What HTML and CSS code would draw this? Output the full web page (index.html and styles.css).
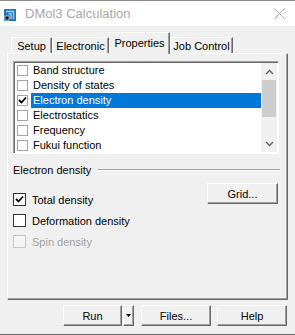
FILE: index.html
```html
<!DOCTYPE html>
<html lang="en">
<head>
    <meta charset="UTF-8">
    <title>DMol3 Calculation</title>
    <link rel="stylesheet" href="styles.css">
</head>
<body>
    <div class="window">
        <div class="titlebar">
            <svg class="app-icon" width="12" height="12" viewBox="0 0 12 12">
                <rect x="0" y="0" width="12" height="12" fill="#1f74bd"/>
                <path d="M2 2.5 H9.5 V10" fill="none" stroke="#9fd0f5" stroke-width="1.4"/>
                <path d="M4.5 5 H7 V10" fill="none" stroke="#9fd0f5" stroke-width="1.4"/>
                <rect x="1" y="7" width="4" height="4" fill="#111" stroke="#fff" stroke-width="0.6"/>
            </svg>
            <span class="title">DMol3 Calculation</span>
            <svg class="close" width="11" height="11" viewBox="0 0 11 11">
                <path d="M0.5 0.5 L10.5 10.5 M10.5 0.5 L0.5 10.5" stroke="#a8a8a8" stroke-width="0.9"/>
            </svg>
        </div>

        <div class="tabs">
            <div class="tab tab-setup">Setup</div>
            <div class="tab tab-electronic">Electronic</div>
            <div class="tab tab-properties active">Properties</div>
            <div class="tab tab-job">Job Control</div>
        </div>

        <div class="panel">
            <div class="listbox">
                <ul class="items">
                    <li><span class="check"></span><span class="label">Band structure</span></li>
                    <li><span class="check"></span><span class="label">Density of states</span></li>
                    <li class="selected">
                        <span class="check">
                            <svg width="9" height="9" viewBox="0 0 9 9"><path d="M1 4 L3.5 6.5 L8 1.5" fill="none" stroke="#000" stroke-width="1.8"/></svg>
                        </span>
                        <span class="label">Electron density</span>
                    </li>
                    <li><span class="check"></span><span class="label">Electrostatics</span></li>
                    <li><span class="check"></span><span class="label">Frequency</span></li>
                    <li><span class="check"></span><span class="label">Fukui function</span></li>
                </ul>
                <div class="scrollbar">
                    <div class="arrow">
                        <svg width="9" height="6" viewBox="0 0 9 6"><path d="M1 5 L4.5 1.5 L8 5" fill="none" stroke="#606060" stroke-width="1.4"/></svg>
                    </div>
                    <div class="thumb"></div>
                    <div class="track"></div>
                    <div class="arrow">
                        <svg width="9" height="6" viewBox="0 0 9 6"><path d="M1 1 L4.5 4.5 L8 1" fill="none" stroke="#606060" stroke-width="1.4"/></svg>
                    </div>
                </div>
            </div>

            <div class="group-title">
                <span>Electron density</span>
                <div class="rule"></div>
            </div>

            <div class="options">
                <div class="checks">
                    <div class="option">
                        <span class="box">
                            <svg width="9" height="9" viewBox="0 0 9 9"><path d="M1 4 L3.5 6.5 L8 1.5" fill="none" stroke="#000" stroke-width="1.8"/></svg>
                        </span>
                        Total density
                    </div>
                    <div class="option"><span class="box"></span>Deformation density</div>
                    <div class="option disabled"><span class="box"></span>Spin density</div>
                </div>
                <button class="btn grid-btn">Grid...</button>
            </div>
        </div>

        <div class="footer">
            <button class="btn run-btn">Run</button>
            <button class="btn drop-btn">
                <svg width="5" height="3" viewBox="0 0 5 3"><path d="M0 0 H5 L2.5 3 Z" fill="#000"/></svg>
            </button>
            <button class="btn files-btn">Files...</button>
            <button class="btn help-btn">Help</button>
        </div>
    </div>
</body>
</html>
```

FILE: styles.css
```css
body {
    margin: 0;
    font-family: "Liberation Sans", Arial, sans-serif;
    font-size: 11px;
    color: #000;
    background: #f0f0f0;
}

.window {
    width: 295px;
    height: 335px;
    box-sizing: border-box;
    border-top: 1px solid #8c8c8c;
    border-bottom: 1px solid #6a6a6a;
    background: #f0f0f0;
}

/* title bar */
.titlebar {
    height: 25px;
    background: #fff;
    display: flex;
    align-items: center;
    padding-left: 4px;
}

.app-icon {
    margin-top: 2px;
}

.title {
    margin-left: 9px;
    font-size: 13px;
    color: #a8a8a8;
}

.close {
    margin-left: auto;
    margin-right: 10px;
}

/* tabs */
.tabs {
    height: 27px;
    display: flex;
    align-items: flex-end;
    padding-left: 11px;
}

.tab {
    height: 16px;
    line-height: 16px;
    box-sizing: border-box;
    text-align: center;
    border-top: 1px solid #fff;
    border-left: 1px solid #fff;
    border-right: 1px solid #696969;
    box-shadow: inset -1px 0 #a0a0a0;
    background: #f0f0f0;
}

.tab-setup { width: 41px; }
.tab-electronic { width: 57px; }
.tab-properties { width: 61px; }
.tab-job { width: 63px; }

.tab.active {
    height: 22px;
    line-height: 20px;
    margin-bottom: -1px;
    position: relative;
    z-index: 1;
}

/* tab page */
.panel {
    margin: 0 7px;
    height: 247px;
    box-sizing: border-box;
    border-top: 1px solid #fff;
    border-left: 1px solid #fff;
    border-right: 1px solid #696969;
    border-bottom: 1px solid #696969;
    box-shadow: inset -1px -1px #a0a0a0;
    padding: 7px 0 0 5px;
}

.listbox {
    width: 266px;
    height: 93px;
    box-sizing: border-box;
    border: 1px solid;
    border-color: #a0a0a0 #fff #fff #a0a0a0;
    padding: 1px;
    box-shadow: inset 1px 1px #696969;
    background: #fff;
    display: flex;
    overflow: hidden;
}

.items {
    list-style: none;
    margin: 0;
    padding: 0;
    flex: 1;
    overflow: hidden;
}

.items li {
    height: 15px;
    display: flex;
    align-items: center;
    padding-left: 2px;
}

.check {
    width: 11px;
    height: 11px;
    box-sizing: border-box;
    border: 1px solid #a5a5a5;
    background: #fff;
    display: flex;
    align-items: center;
    justify-content: center;
}

.label {
    margin-left: 3px;
    padding-left: 2px;
    flex: 1;
    line-height: 15px;
    height: 15px;
}

.selected .label {
    background: #0078d7;
    color: #fff;
}

.scrollbar {
    width: 16px;
    display: flex;
    flex-direction: column;
    background: #f0f0f0;
}

.arrow {
    height: 17px;
    display: flex;
    align-items: center;
    justify-content: center;
}

.thumb {
    height: 37px;
    margin: 0 1px;
    background: #cdcdcd;
}

.track {
    flex: 1;
}

/* group */
.group-title {
    margin-top: 9px;
    width: 267px;
    height: 13px;
    display: flex;
    align-items: center;
}

.rule {
    flex: 1;
    margin-left: 7px;
    border-top: 1px solid #a0a0a0;
    border-bottom: 1px solid #fff;
}

.options {
    margin-top: 7px;
    width: 265px;
    display: flex;
    justify-content: space-between;
    align-items: flex-start;
}

.checks {
    padding-top: 6px;
}

.option {
    height: 21px;
    display: flex;
    align-items: center;
}

.box {
    width: 13px;
    height: 13px;
    box-sizing: border-box;
    border: 1px solid #333;
    background: #fff;
    margin-right: 6px;
    display: flex;
    align-items: center;
    justify-content: center;
}

.option.disabled {
    color: #a0a0a0;
}

.option.disabled .box {
    border-color: #c4c4c4;
    background: #f4f4f4;
}

/* buttons */
.btn {
    font-family: inherit;
    font-size: 11px;
    color: #000;
    height: 21px;
    padding: 0;
    box-sizing: border-box;
    background: #f0f0f0;
    border: 1px solid;
    border-color: #fff #696969 #696969 #fff;
    box-shadow: inset -1px -1px #a0a0a0;
}

.grid-btn {
    width: 71px;
}

.footer {
    margin-top: 5px;
    padding-right: 8px;
    display: flex;
    justify-content: flex-end;
}

.run-btn { width: 59px; }

.drop-btn {
    width: 11px;
    margin-left: 1px;
    display: flex;
    align-items: center;
    justify-content: center;
}

.files-btn {
    width: 70px;
    margin-left: 7px;
}

.help-btn {
    width: 70px;
    margin-left: 6px;
}
```
